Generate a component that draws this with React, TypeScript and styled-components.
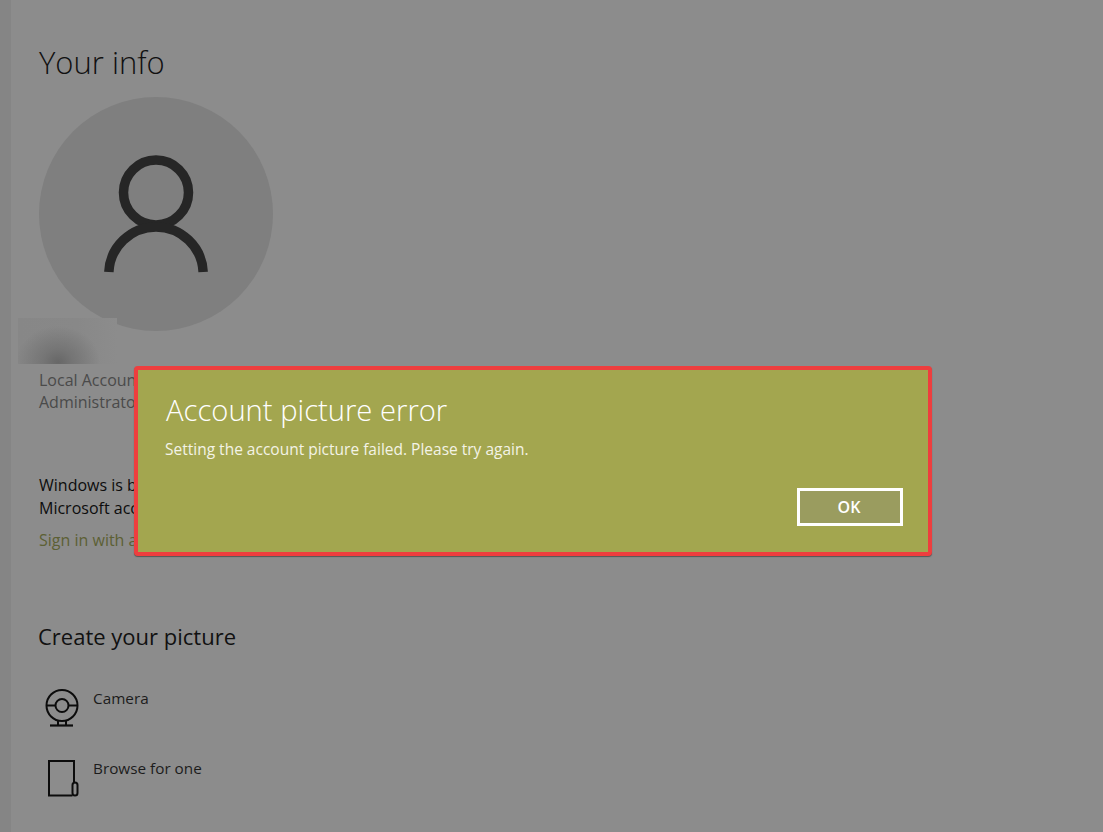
import React from 'react';
import styled, {createGlobalStyle} from 'styled-components';

const GlobalStyle = createGlobalStyle`
  html, body {
    margin: 0;
    padding: 0;
    height: 100%;
    overflow: hidden;
    background: #8c8c8c;
  }
  body {
    font-family: "Open Sans", "Noto Sans", sans-serif;
  }
`

const Page = styled.div`
  position: relative;
  display: flex;
  width: 1103px;
  height: 832px;
  overflow: hidden;
  background: #8c8c8c;
  color: #0b0b0b;
`

const SideStrip = styled.div`
  width: 11px;
  flex: none;
  background: #858585;
`

const Content = styled.main`
  flex: 1;
  padding: 40px 0 0 28px;
  display: flex;
  flex-direction: column;
  align-items: flex-start;
`

const Title = styled.h1`
  margin: 0;
  font-size: 31px;
  line-height: 44px;
  font-weight: 300;
  color: #111;
`

const Avatar = styled.div`
  margin-top: 13px;
  width: 234px;
  height: 234px;
  border-radius: 50%;
  background: #7f7f7f;
  display: flex;
  align-items: center;
  justify-content: center;
`

const BlurredName = styled.div`
  margin: -13px 0 0 -21px;
  width: 99px;
  height: 46px;
  position: relative;
  background:
    radial-gradient(ellipse 42px 36px at 40px 44px, #676767 0%, #757575 35%, rgba(136, 136, 136, 0) 100%),
    linear-gradient(90deg, #878787 0%, #888888 60%, #8c8c8c 100%);
`

const AccountInfo = styled.div`
  margin-top: 5px;
  font-size: 16px;
  line-height: 22px;
  color: #4a4a4a;
`

const Notice = styled.p`
  margin: 61px 0 0;
  font-size: 16px;
  line-height: 23px;
  color: #0d0d0d;
`

const SignInLink = styled.a`
  display: block;
  margin-top: 9px;
  font-size: 16px;
  line-height: 23px;
  color: #5c6034;
`

const SectionTitle = styled.h2`
  margin: 69px 0 0 -1px;
  font-size: 22px;
  line-height: 30px;
  font-weight: 400;
  color: #111;
`

const OptionList = styled.div`
  margin-top: 36px;
`

const OptionRow = styled.div`
  display: flex;
  align-items: flex-start;
  gap: 14px;
  margin: 0 0 22px 6px;
  height: 48px;
`

const OptionIcon = styled.svg`
  width: 34px;
  height: 48px;
  flex: none;
`

const OptionLabel = styled.span`
  font-size: 15.3px;
  line-height: 22px;
  color: #1c1c1c;
`

const Dialog = styled.section`
  position: absolute;
  left: 134px;
  top: 366px;
  width: 798px;
  height: 190px;
  box-sizing: border-box;
  border: 4px solid #ee3e3e;
  border-radius: 4px;
  background: #a3a64f;
  box-shadow: 0 1px 1px #555;
  padding: 20px 25px 26px 27px;
  color: #fff;
  display: flex;
  flex-direction: column;
`

const DialogTitle = styled.h3`
  margin: 0 0 0 1px;
  font-size: 29.2px;
  line-height: 40px;
  font-weight: 300;
`

const DialogMessage = styled.p`
  margin: 8px 0 0;
  font-size: 15.5px;
  line-height: 22px;
  color: #f3f3e6;
`

const DialogActions = styled.div`
  margin-top: auto;
  display: flex;
  justify-content: flex-end;
`

const OkButton = styled.button`
  width: 106px;
  height: 38px;
  box-sizing: border-box;
  border: 3px solid #fff;
  background: #9a9c5f;
  color: #fff;
  font-family: inherit;
  font-size: 16px;
  font-weight: 600;
  padding: 0 2px 0 0;
`

const UserGlyph = () => (
    <svg width="104" height="118" viewBox="0 0 104 118" fill="none" stroke="#262626" strokeWidth="9.5">
        <circle cx="52" cy="37.5" r="32.5"/>
        <path d="M4.85 117 A47.2 47.2 0 0 1 99.15 117"/>
    </svg>
)

const CameraGlyph = () => (
    <OptionIcon viewBox="0 0 34 48" fill="none" stroke="#0c0c0c" strokeWidth="2">
        <circle cx="17" cy="18.5" r="15.5"/>
        <circle cx="17" cy="18.5" r="6.5"/>
        <path d="M2 18.5 H10.5 M23.5 18.5 H32"/>
        <path d="M13 33 V38 M21 33 V38"/>
        <path d="M5 38.5 H28" strokeWidth="2.2"/>
    </OptionIcon>
)

const BrowseGlyph = () => (
    <OptionIcon viewBox="0 0 34 48" fill="none" stroke="#0c0c0c" strokeWidth="2">
        <path d="M29 25.5 V4 H4 V38.5 H27.5"/>
        <rect x="27.5" y="25.5" width="5" height="13" rx="2.5"/>
    </OptionIcon>
)

export default function App() {
    return (
        <>
            <GlobalStyle/>
            <Page>
                <SideStrip/>
                <Content>
                    <Title>Your info</Title>
                    <Avatar>
                        <UserGlyph/>
                    </Avatar>
                    <BlurredName/>
                    <AccountInfo>
                        Local Account<br/>Administrator
                    </AccountInfo>
                    <Notice>
                        Windows is better when your settings and files automatically sync. Use a<br/>
                        Microsoft account to easily get all your stuff on all your devices.
                    </Notice>
                    <SignInLink>Sign in with a Microsoft account instead</SignInLink>
                    <SectionTitle>Create your picture</SectionTitle>
                    <OptionList>
                        <OptionRow>
                            <CameraGlyph/>
                            <OptionLabel>Camera</OptionLabel>
                        </OptionRow>
                        <OptionRow>
                            <BrowseGlyph/>
                            <OptionLabel>Browse for one</OptionLabel>
                        </OptionRow>
                    </OptionList>
                </Content>
                <Dialog>
                    <DialogTitle>Account picture error</DialogTitle>
                    <DialogMessage>Setting the account picture failed. Please try again.</DialogMessage>
                    <DialogActions>
                        <OkButton>OK</OkButton>
                    </DialogActions>
                </Dialog>
            </Page>
        </>
    )
}
